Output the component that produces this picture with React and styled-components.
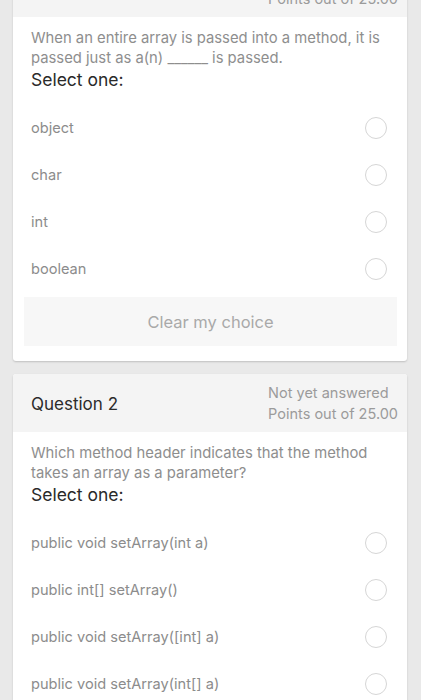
import React, { useState } from "react";
import styled, { createGlobalStyle } from "styled-components";

const GlobalStyle = createGlobalStyle`
  html, body {
    margin: 0;
    padding: 0;
    background: #e9e9e9;
    font-family: Inter, "Noto Sans", "Liberation Sans", sans-serif;
    -webkit-font-smoothing: antialiased;
  }
`;

const Page = styled.div`
  height: 700px;
  overflow: hidden;
  padding: 0 14px 0 13px;
`;

const List = styled.div`
  display: flex;
  flex-direction: column;
  gap: 13px;
  margin-top: -41px;
`;

const Card = styled.div`
  background: #ffffff;
  border-radius: 3px;
  box-shadow: 0 1px 2px rgba(0, 0, 0, 0.18);
  overflow: hidden;
`;

const Header = styled.div`
  height: 58px;
  background: #f4f4f4;
  display: flex;
  align-items: center;
  justify-content: space-between;
  padding: 0 9px 0 18px;
`;

const QTitle = styled.div`
  font-size: 17px;
  color: #2b2b2b;
  margin-top: 2px;
`;

const Status = styled.div`
  font-size: 14.5px;
  line-height: 21px;
  color: #9b9b9b;
`;

const Body = styled.div`
  padding: 12px 0 15px 18px;
`;

const Prompt = styled.div`
  font-size: 14.8px;
  line-height: 19.5px;
  color: #8e8e8e;
  padding-right: 20px;
`;

const SelectOne = styled.div`
  font-size: 17.5px;
  line-height: 22px;
  color: #2a2a2a;
  margin-top: 1px;
  margin-bottom: 13px;
`;

const Option = styled.label`
  height: 47px;
  display: flex;
  align-items: center;
  justify-content: space-between;
  padding-right: 20px;
  font-size: 14.6px;
  color: #8c8c8c;
  cursor: pointer;
`;

const Radio = styled.span`
  width: 22px;
  height: 22px;
  box-sizing: border-box;
  border-radius: 50%;
  border: 1.5px solid ${(p) => (p.$on ? "#5b8fd6" : "#d6d6d6")};
  display: flex;
  align-items: center;
  justify-content: center;
  &::after {
    content: "";
    width: 11px;
    height: 11px;
    border-radius: 50%;
    background: ${(p) => (p.$on ? "#5b8fd6" : "transparent")};
  }
`;

const ClearButton = styled.button`
  display: block;
  width: calc(100% + 18px - 10px - 11px);
  margin: 5px 0 0 -7px;
  height: 49px;
  border: none;
  background: #f7f7f7;
  color: #a9a9a9;
  font-family: inherit;
  font-size: 16.5px;
  cursor: pointer;
`;

const Question = ({ title, prompt, options, showClear }) => {
  const [picked, setPicked] = useState(null);
  return (
    <Card>
      <Header>
        <QTitle>{title}</QTitle>
        <Status>
          Not yet answered
          <br />
          Points out of 25.00
        </Status>
      </Header>
      <Body>
        <Prompt>{prompt}</Prompt>
        <SelectOne>Select one:</SelectOne>
        {options.map((o, i) => (
          <Option key={o} onClick={() => setPicked(i)}>
            <span>{o}</span>
            <Radio $on={picked === i} />
          </Option>
        ))}
        {showClear && (
          <ClearButton onClick={() => setPicked(null)}>Clear my choice</ClearButton>
        )}
      </Body>
    </Card>
  );
};

export default function App() {
  return (
    <>
      <GlobalStyle />
      <Page>
        <List>
          <Question
            title="Question 1"
            prompt="When an entire array is passed into a method, it is passed just as a(n) ______ is passed."
            options={["object", "char", "int", "boolean"]}
            showClear
          />
          <Question
            title="Question 2"
            prompt="Which method header indicates that the method takes an array as a parameter?"
            options={[
              "public void setArray(int a)",
              "public int[] setArray()",
              "public void setArray([int] a)",
              "public void setArray(int[] a)",
            ]}
          />
        </List>
      </Page>
    </>
  );
}
